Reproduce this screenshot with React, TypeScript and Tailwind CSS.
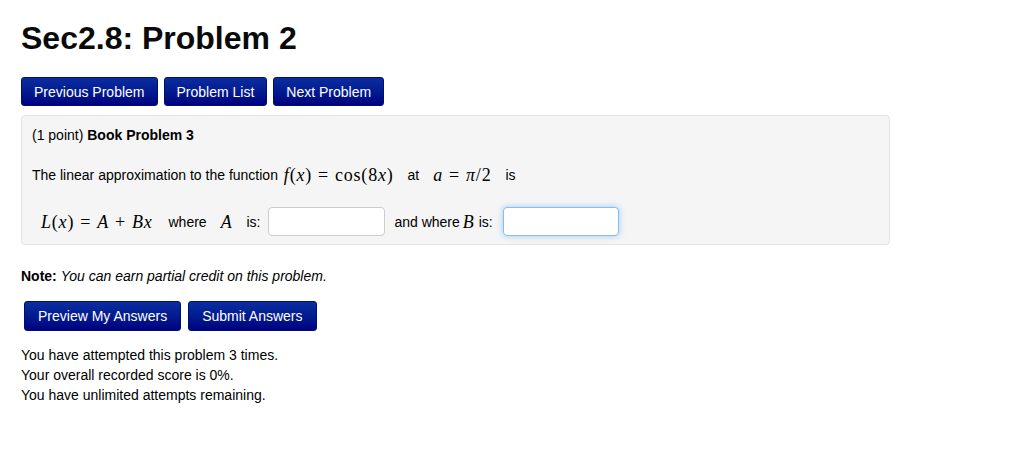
import type { ReactNode } from "react"

const serif = "font-['Liberation_Serif','Times_New_Roman',serif] text-[18px] leading-none tracking-[0.8px]"

function I({ children }: { children: ReactNode }) {
  return <span className="italic">{children}</span>
}

function Rel({ children }: { children: ReactNode }) {
  return <span className="px-[6px]">{children}</span>
}

function Op({ children }: { children: ReactNode }) {
  return <span className="px-[6px]">{children}</span>
}

function NavButton({ children }: { children: ReactNode }) {
  return (
    <button
      type="button"
      className="h-[29px] rounded-[3px] border border-[#00106a] bg-gradient-to-b from-[#0c2d9f] to-[#000080] px-3 text-[14px] leading-[20px] text-white"
    >
      {children}
    </button>
  )
}

function SubmitButton({ children }: { children: ReactNode }) {
  return (
    <button
      type="button"
      className="h-[30px] rounded-[3px] border border-[#00106a] bg-gradient-to-b from-[#0c2d9f] to-[#000080] px-[13px] text-[14px] leading-[20px] text-white"
    >
      {children}
    </button>
  )
}

export default function App() {
  return (
    <div className="min-h-[455px] bg-white px-[21px] font-['Liberation_Sans',Arial,sans-serif] text-[14px] leading-[20px] text-black">
      <h1 className="mt-[20px] text-[32px] font-bold leading-[36px] text-[#0a0a0a]">Sec2.8: Problem 2</h1>

      <div className="mt-[21px] flex gap-[6px]">
        <NavButton>Previous Problem</NavButton>
        <NavButton>Problem List</NavButton>
        <NavButton>Next Problem</NavButton>
      </div>

      <div className="mt-[9px] w-[869px] rounded-[4px] border border-[#e3e3e3] bg-[#f5f5f5] pt-[9px] pb-[8px] pl-[10px]">
        <div className="h-[20px]">
          (1 point) <b>Book Problem 3</b>
        </div>

        <div className="mt-[20px] flex h-[20px] items-center whitespace-pre">
          <span>The linear approximation to the function </span>
          <span className={`${serif} ml-[2px]`}>
            <I>f</I>(<I>x</I>)<Rel>=</Rel>cos(8<I>x</I>)
          </span>
          <span className="ml-[14px]">at</span>
          <span className={`${serif} ml-[14px]`}>
            <I>a</I>
            <Rel>=</Rel>
            <I>π</I>/2
          </span>
          <span className="ml-[14px]">is</span>
        </div>

        <div className="mt-[22px] flex h-[29px] items-center pl-[9px]">
          <span className={serif}>
            <I>L</I>(<I>x</I>)<Rel>=</Rel>
            <I>A</I>
            <Op>+</Op>
            <I>Bx</I>
          </span>
          <span className="ml-[16px]">where</span>
          <span className={`${serif} ml-[14px]`}>
            <I>A</I>
          </span>
          <span className="ml-[14px]">is:</span>
          <input
            type="text"
            className="ml-[8px] h-[29px] w-[117px] rounded-[4px] border border-[#cccccc] bg-white px-2 outline-none"
          />
          <span className="ml-[9px]">and where </span>
          <span className={`${serif} ml-[3px]`}>
            <I>B</I>
          </span>
          <span className="ml-[4px]">is:</span>
          <input
            type="text"
            className="ml-[10px] h-[29px] w-[116px] rounded-[4px] border border-[#88bdf0] bg-white px-2 shadow-[0_0_6px_rgba(82,168,236,0.55)] outline-none"
          />
        </div>
      </div>

      <p className="mt-[21px]">
        <b>Note:</b> <i>You can earn partial credit on this problem.</i>
      </p>

      <div className="mt-[15px] ml-[3px] flex gap-[7px]">
        <SubmitButton>Preview My Answers</SubmitButton>
        <SubmitButton>Submit Answers</SubmitButton>
      </div>

      <div className="mt-[14px]">
        <p>You have attempted this problem 3 times.</p>
        <p>Your overall recorded score is 0%.</p>
        <p>You have unlimited attempts remaining.</p>
      </div>
    </div>
  )
}
